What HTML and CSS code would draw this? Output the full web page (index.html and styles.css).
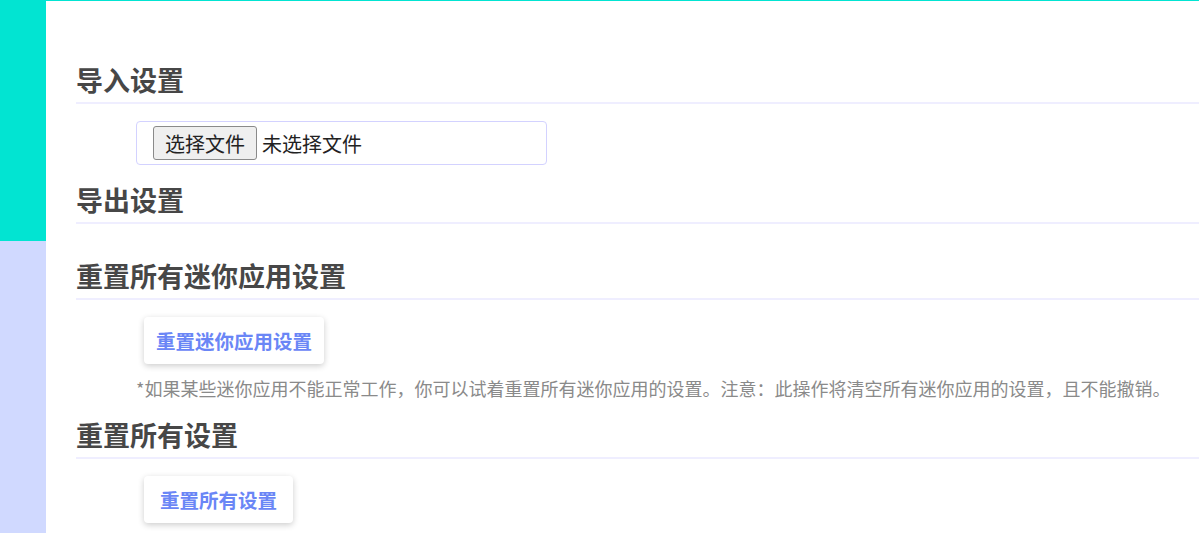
FILE: index.html
```html
<!DOCTYPE html>
<html lang="zh-CN">
<head>
    <meta charset="UTF-8">
    <meta name="viewport" content="width=device-width, initial-scale=1.0">
    <title>设置</title>
    <link rel="stylesheet" href="styles.css">
</head>
<body>
    <div class="sidebar">
        <div class="sidebar-top"></div>
    </div>
    <div class="main">
        <div class="section">
            <h2>导入设置</h2>
            <div class="section-body">
                <div class="file-box">
                    <button class="file-btn">选择文件</button>
                    <span class="file-name">未选择文件</span>
                </div>
            </div>
        </div>
        <div class="section">
            <h2>导出设置</h2>
            <div class="section-body"></div>
        </div>
        <div class="section">
            <h2>重置所有迷你应用设置</h2>
            <div class="section-body">
                <button class="action-btn">重置迷你应用设置</button>
                <p class="note">*如果某些迷你应用不能正常工作，你可以试着重置所有迷你应用的设置。注意：此操作将清空所有迷你应用的设置，且不能撤销。</p>
            </div>
        </div>
        <div class="section">
            <h2>重置所有设置</h2>
            <div class="section-body">
                <button class="action-btn">重置所有设置</button>
            </div>
        </div>
    </div>
</body>
</html>
```

FILE: styles.css
```css
body {
    display: flex;
    margin: 0;
    height: 100vh;
    overflow: hidden;
    background: #ffffff;
    font-family: 'Noto Sans CJK SC', 'Noto Sans', sans-serif;
}
.sidebar {
    width: 46px;
    flex-shrink: 0;
    background: #d0d9ff;
}
.sidebar-top {
    height: 241px;
    background: #02e4d2;
}
.main {
    flex: 1;
    border-top: 1px solid #02e4d2;
    padding: 62px 0 0 30px;
}
.section + .section {
    margin-top: 18px;
}
h2 {
    margin: 0;
    padding-bottom: 5px;
    font-size: 27px;
    line-height: 34px;
    font-weight: bold;
    color: #474747;
    border-bottom: 2px solid #efeeff;
}
.section-body {
    padding: 17px 0 0 60px;
}
.file-box {
    display: flex;
    align-items: center;
    width: 377px;
    padding: 4px 16px;
    border: 1px solid #d3d2ff;
    border-radius: 4px;
}
.file-btn {
    height: 34px;
    padding: 0 11px;
    border: 1px solid #8a8a8a;
    border-radius: 3px;
    background: #efefef;
    color: #222;
    font-family: inherit;
    font-size: 20px;
}
.file-name {
    margin-left: 5px;
    font-size: 20px;
    color: #222;
}
.action-btn {
    min-width: 149px;
    margin-left: 8px;
    padding: 10px 12px;
    border: none;
    border-radius: 4px;
    background: #ffffff;
    color: #6a86f6;
    font-family: inherit;
    font-size: 19.5px;
    line-height: 27px;
    font-weight: bold;
    box-shadow: 0 2px 6px rgba(0, 0, 0, 0.2);
    cursor: pointer;
}
.note {
    margin: 12px 0 0;
    font-size: 18px;
    line-height: 24px;
    color: #8a8a8a;
    white-space: nowrap;
}
```
